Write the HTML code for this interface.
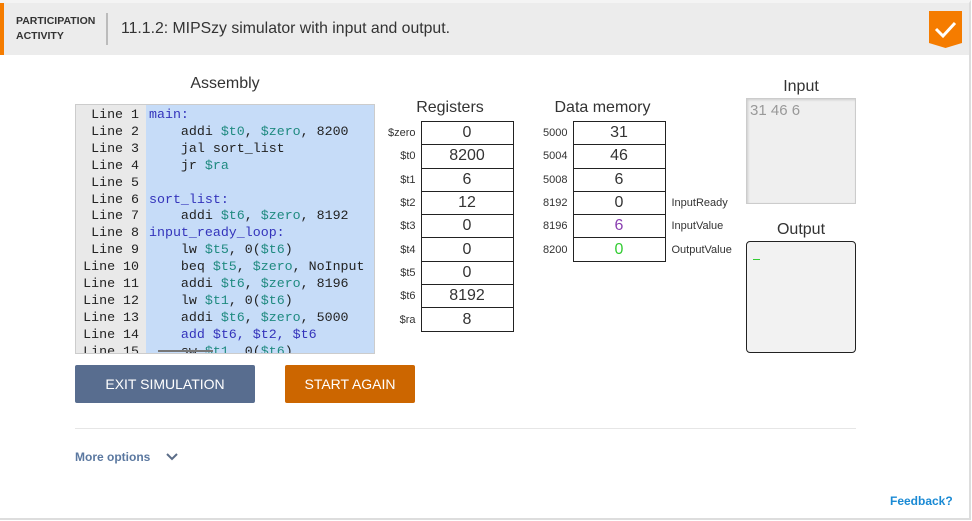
<!DOCTYPE html>
<html><head><style>
*{margin:0;padding:0;box-sizing:border-box}
body{width:972px;height:521px;background:#fff;font-family:"Liberation Sans",Arial,sans-serif;position:relative;overflow:hidden}
.abs{position:absolute}
#frame{left:0;top:0;width:971px;height:520px;border-right:2px solid #ddd;border-bottom:2px solid #ddd;border-top:3px solid #f4f4f4}
#hdr{left:0;top:3px;width:969px;height:52px;background:#ececec;border-left:4px solid #f57c00}
.pa{left:16px;top:14px;font-size:10.5px;font-weight:bold;color:#333;line-height:15px}
.sep{left:106px;top:13px;width:2px;height:32px;background:#bbb}
.title{left:121px;top:20px;font-size:15.8px;color:#333}
.code{left:75px;top:104px;width:300px;height:250px;background:#c6dcf8;border:1px solid #ccc;overflow:hidden;font-family:"Liberation Mono",monospace;font-size:13.3px;line-height:16.9px}
.gut{position:absolute;left:0;top:0;width:70px;height:100%;background:#e9e9e9}
.ln{position:absolute;left:0;width:63px;text-align:right;color:#222}
.cl{position:absolute;left:73px;color:#222;white-space:pre}
.k{color:#3333bb}.r{color:#1f8a80}
.lbl{font-size:16px;color:#333;text-align:center}
table{border-collapse:collapse;position:absolute;table-layout:fixed}
td.v{border:1px solid #222;width:92px;height:23.3px;text-align:center;font-size:16px;color:#333;padding:0}
td.l{font-size:11px;color:#333;text-align:right;padding-right:5px;height:23.3px}
td.n{font-size:11px;color:#333;padding-left:6px;width:90px}
.btn{height:38px;color:#fff;font-size:14px;text-align:center;line-height:38px;border-radius:2px}
</style></head><body>
<div id="frame" class="abs"></div>
<div id="hdr" class="abs"></div>
<div class="abs pa">PARTICIPATION<br>ACTIVITY</div>
<div class="abs sep"></div>
<div class="abs title">11.1.2: MIPSzy simulator with input and output.</div>
<svg class="abs" style="left:929px;top:11px" width="33" height="37"><path d="M0 0H33V32L16.5 37L0 32Z" fill="#f57c00"/><path d="M7 18L14 25L26 12" stroke="#fff" stroke-width="3" fill="none"/></svg>

<div class="abs lbl" style="left:175px;top:75px;width:100px">Assembly</div>
<div class="abs code">
<div class="gut"></div>
<div class="ln" style="top:2px">Line 1<br>Line 2<br>Line 3<br>Line 4<br>Line 5<br>Line 6<br>Line 7<br>Line 8<br>Line 9<br>Line 10<br>Line 11<br>Line 12<br>Line 13<br>Line 14<br>Line 15</div>
<div class="cl" style="top:2px"><span class="k">main:</span>
    addi <span class="r">$t0</span>, <span class="r">$zero</span>, 8200
    jal sort_list
    jr <span class="r">$ra</span>

<span class="k">sort_list:</span>
    addi <span class="r">$t6</span>, <span class="r">$zero</span>, 8192
<span class="k">input_ready_loop:</span>
    lw <span class="r">$t5</span>, 0(<span class="r">$t6</span>)
    beq <span class="r">$t5</span>, <span class="r">$zero</span>, NoInput
    addi <span class="r">$t6</span>, <span class="r">$zero</span>, 8196
    lw <span class="r">$t1</span>, 0(<span class="r">$t6</span>)
    addi <span class="r">$t6</span>, <span class="r">$zero</span>, 5000
    <span class="k">add $t6, $t2, $t6</span>
    sw <span class="r">$t1</span>, 0(<span class="r">$t6</span>)</div>
<div style="position:absolute;left:82px;top:245px;width:55px;height:2px;background:#777"></div>
</div>

<div class="abs lbl" style="left:400px;top:99px;width:100px">Registers</div>
<table style="left:380px;top:121px">
<colgroup><col style="width:41px"><col style="width:92px"></colgroup>
<tr><td class="l">$zero</td><td class="v">0</td></tr>
<tr><td class="l">$t0</td><td class="v">8200</td></tr>
<tr><td class="l">$t1</td><td class="v">6</td></tr>
<tr><td class="l">$t2</td><td class="v">12</td></tr>
<tr><td class="l">$t3</td><td class="v">0</td></tr>
<tr><td class="l">$t4</td><td class="v">0</td></tr>
<tr><td class="l">$t5</td><td class="v">0</td></tr>
<tr><td class="l">$t6</td><td class="v">8192</td></tr>
<tr><td class="l">$ra</td><td class="v">8</td></tr>
</table>

<div class="abs lbl" style="left:545px;top:99px;width:115px">Data memory</div>
<table style="left:534px;top:121px">
<colgroup><col style="width:39px"><col style="width:92px"><col style="width:90px"></colgroup>
<tr><td class="l">5000</td><td class="v">31</td><td class="n"></td></tr>
<tr><td class="l">5004</td><td class="v">46</td><td class="n"></td></tr>
<tr><td class="l">5008</td><td class="v">6</td><td class="n"></td></tr>
<tr><td class="l">8192</td><td class="v">0</td><td class="n">InputReady</td></tr>
<tr><td class="l">8196</td><td class="v" style="color:#8a3fb0">6</td><td class="n">InputValue</td></tr>
<tr><td class="l">8200</td><td class="v" style="color:#3c3">0</td><td class="n">OutputValue</td></tr>
</table>

<div class="abs lbl" style="left:751px;top:78px;width:100px">Input</div>
<div class="abs" style="left:746px;top:98px;width:110px;height:106px;background:#efefef;border:1px solid #ccc;box-shadow:inset 1px 1px 2px #ccc;color:#999;font-size:15px;padding:3px 3px">31 46 6</div>
<div class="abs lbl" style="left:751px;top:221px;width:100px">Output</div>
<div class="abs" style="left:746px;top:241px;width:110px;height:112px;background:#f2f2f2;border:1px solid #222;border-radius:4px"><div style="position:absolute;left:6px;top:17px;width:7px;height:1px;background:#3c3"></div></div>

<div class="abs btn" style="left:75px;top:365px;width:180px;background:#586d8f">EXIT SIMULATION</div>
<div class="abs btn" style="left:285px;top:365px;width:130px;background:#cc6600">START AGAIN</div>
<div class="abs" style="left:75px;top:428px;width:781px;height:1px;background:#e6e6e6"></div>
<div class="abs" style="left:75px;top:450px;font-size:12px;font-weight:bold;color:#5b78a0">More options</div>
<svg class="abs" style="left:165px;top:452px" width="14" height="10"><path d="M2 2L7 7L12 2" stroke="#5b6d88" stroke-width="2" fill="none"/></svg>
<div class="abs" style="left:890px;top:494px;font-size:12px;font-weight:bold;color:#1a8ad4">Feedback?</div>
</body></html>
